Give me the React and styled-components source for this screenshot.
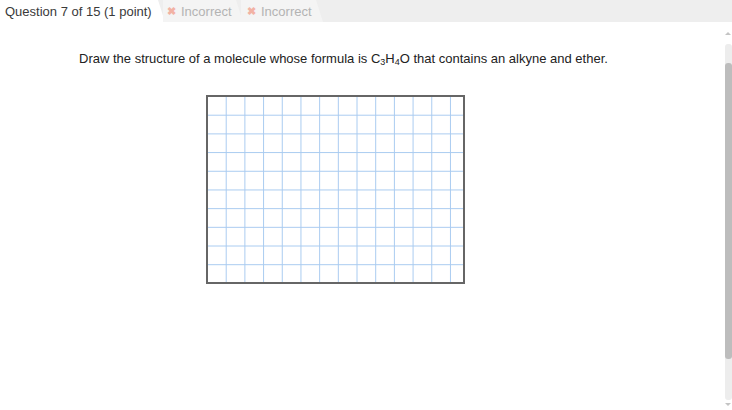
import styled, { createGlobalStyle } from "styled-components";

const GlobalStyle = createGlobalStyle`
  html, body {
    margin: 0;
    padding: 0;
    background: #ffffff;
    font-family: "Liberation Sans", Arial, sans-serif;
    overflow: hidden;
  }
`;

const Page = styled.div`
  width: 732px;
  height: 410px;
  display: flex;
  flex-direction: column;
`;

const TabBar = styled.div`
  height: 22px;
  background: #eeeeee;
  display: flex;
  align-items: stretch;
`;

const Tab = styled.div`
  display: flex;
  align-items: center;
  gap: 5px;
  width: ${(p) => p.$width}px;
  margin-right: -2px;
  padding-left: ${(p) => p.$pad}px;
  box-sizing: border-box;
  font-size: 13px;
  color: ${(p) => (p.$active ? "#3a3a3a" : "#b3b3b3")};
  background: ${(p) => (p.$active ? "#ffffff" : "#f4f4f4")};
  clip-path: polygon(0 0, calc(100% - 7px) 0, 100% 100%, 0 100%);
  padding-top: 1px;
`;

const Cross = styled.span`
  color: #f2b2a4;
  font-size: 11px;
  font-weight: bold;
`;

const Body = styled.div`
  flex: 1;
  display: flex;
`;

const Main = styled.div`
  flex: 1;
  padding: 29px 0 0 79px;
`;

const Prompt = styled.p`
  margin: 0;
  font-size: 13px;
  color: #222222;
  line-height: 15px;

  sub {
    font-size: 9px;
    vertical-align: -2px;
    line-height: 0;
  }
`;

const Canvas = styled.div`
  margin: 29px 0 0 127px;
  width: 259px;
  height: 189px;
  box-sizing: border-box;
  border: 2px solid #666666;
  background-color: #ffffff;
  background-image:
    linear-gradient(to right, transparent 17.7px, #a9cbf0 17.7px),
    linear-gradient(to bottom, transparent 17.7px, #a9cbf0 17.7px);
  background-size: 18.7px 18.7px;
  background-position: 0 0;
`;

const Rail = styled.div`
  width: 8px;
  display: flex;
  flex-direction: column;
  align-items: center;
`;

const Arrow = styled.div`
  width: 0;
  height: 0;
  border-left: 3px solid transparent;
  border-right: 3px solid transparent;
  ${(p) =>
    p.$down
      ? "border-top: 3px solid #c4c4c4; margin-top: 3px;"
      : "border-bottom: 3px solid #c4c4c4; margin-top: 10px; margin-bottom: 9px;"}
`;

const Track = styled.div`
  width: 7px;
  height: 356px;
  margin-left: 1px;
  background: #ededed;
  border-radius: 3px;
  padding-top: 19px;
  box-sizing: border-box;
`;

const Thumb = styled.div`
  height: 296px;
  background: #bdbdbd;
  border-radius: 3px;
`;

export default function App() {
  return (
    <Page>
      <GlobalStyle />
      <TabBar>
        <Tab $active $width={165} $pad={5}>
          Question 7 of 15 (1 point)
        </Tab>
        <Tab $width={80} $pad={4}>
          <Cross>✖</Cross>Incorrect
        </Tab>
        <Tab $width={82} $pad={6}>
          <Cross>✖</Cross>Incorrect
        </Tab>
      </TabBar>
      <Body>
        <Main>
          <Prompt>
            Draw the structure of a molecule whose formula is C<sub>3</sub>H
            <sub>4</sub>O that contains an alkyne and ether.
          </Prompt>
          <Canvas />
        </Main>
        <Rail>
          <Arrow />
          <Track>
            <Thumb />
          </Track>
          <Arrow $down />
        </Rail>
      </Body>
    </Page>
  );
}
